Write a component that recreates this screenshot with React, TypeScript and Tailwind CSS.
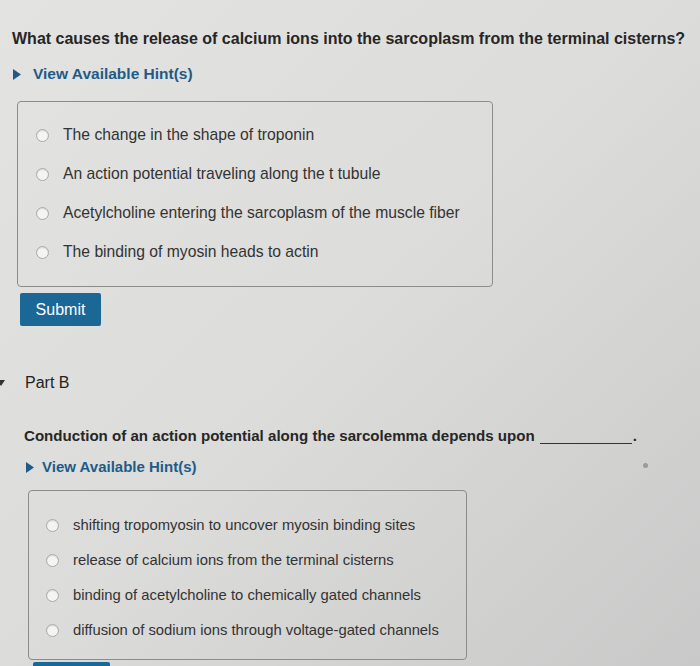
import React from "react";

const partA = [
  "The change in the shape of troponin",
  "An action potential traveling along the t tubule",
  "Acetylcholine entering the sarcoplasm of the muscle fiber",
  "The binding of myosin heads to actin",
];

const partB = [
  "shifting tropomyosin to uncover myosin binding sites",
  "release of calcium ions from the terminal cisterns",
  "binding of acetylcholine to chemically gated channels",
  "diffusion of sodium ions through voltage-gated channels",
];

function Radio() {
  return (
    <span className="w-[13px] h-[13px] shrink-0 rounded-full border border-[#a9a9a9] bg-[#f4f4f2] shadow-[inset_0_1px_1px_rgba(0,0,0,0.12)]" />
  );
}

function Hint() {
  return (
    <div className="flex items-center h-5 gap-[12px] text-[15.5px] font-bold text-[#1f5b88]">
      <svg width="8" height="11" viewBox="0 0 8 11" className="shrink-0">
        <path d="M0 0 L8 5.5 L0 11 Z" fill="#1f5b88" />
      </svg>
      <span>View Available Hint(s)</span>
    </div>
  );
}

export default function App() {
  return (
    <div
      className="relative h-[666px] w-[700px] overflow-hidden bg-linear-to-br from-[#e3e3e1] via-[#dcdcda] to-[#c9c9c9] text-[#2b2b2b]"
      style={{ fontFamily: '"Liberation Sans", Arial, sans-serif' }}
    >
      <div className="pt-[29px] pl-[12px]">
        <h1 className="h-5 leading-5 text-[16px] font-bold text-[#262626] whitespace-nowrap">
          What causes the release of calcium ions into the sarcoplasm from the terminal cisterns?
        </h1>
        <div className="mt-[15px] ml-[1px]">
          <Hint />
        </div>

        <div className="mt-[17px] ml-[5px] w-[476px] h-[186px] rounded-[4px] border border-[#8c8c8c] pt-[21px] pl-[18px] flex flex-col gap-[15px]">
          {partA.map((t) => (
            <label key={t} className="flex items-center h-6 gap-[14px] text-[15.7px] text-[#333]">
              <Radio />
              <span>{t}</span>
            </label>
          ))}
        </div>

        <button className="mt-[6px] ml-[8px] w-[81px] h-[33px] rounded-[2px] bg-[#1b6796] text-white text-[16px]">
          Submit
        </button>
      </div>

      <div className="mt-[47px] flex items-center h-5 text-[16px] font-medium text-[#222]">
        <svg width="5" height="6" viewBox="0 0 5 6" className="shrink-0">
          <path d="M-3 0 L5 0 L1 6 Z" fill="#333" />
        </svg>
        <span className="ml-[20px]">Part B</span>
      </div>

      <div className="pl-[24px]">
        <p className="mt-[33px] h-5 leading-5 text-[15.1px] font-bold text-[#262626] flex items-end whitespace-nowrap">
          <span>Conduction of an action potential along the sarcolemma depends upon</span>
          <span className="ml-[5px] w-[92px] border-b border-[#333] mb-[2px]" />
          <span className="ml-[1px]">.</span>
        </p>
        <div className="mt-[11px] ml-[3px] -translate-x-[1px]">
          <div className="flex items-center h-5 gap-[8px] text-[15px] font-bold text-[#1f5b88]">
            <svg width="8" height="11" viewBox="0 0 8 11" className="shrink-0">
              <path d="M0 0 L8 5.5 L0 11 Z" fill="#1f5b88" />
            </svg>
            <span>View Available Hint(s)</span>
          </div>
        </div>

        <div className="mt-[13px] ml-[4px] w-[439px] h-[170px] rounded-[4px] border border-[#8c8c8c] pt-[22px] pl-[17px] flex flex-col gap-[11px]">
          {partB.map((t) => (
            <label key={t} className="flex items-center h-6 gap-[14px] text-[14.8px] text-[#333]">
              <Radio />
              <span>{t}</span>
            </label>
          ))}
        </div>

        <div className="mt-[2px] ml-[9px] w-[77px] h-[33px] rounded-[2px] bg-[#1b6796]" />
      </div>

      <span className="absolute left-[643px] top-[463px] w-[5px] h-[5px] rounded-full bg-[#9a9a9a]" />
    </div>
  );
}
